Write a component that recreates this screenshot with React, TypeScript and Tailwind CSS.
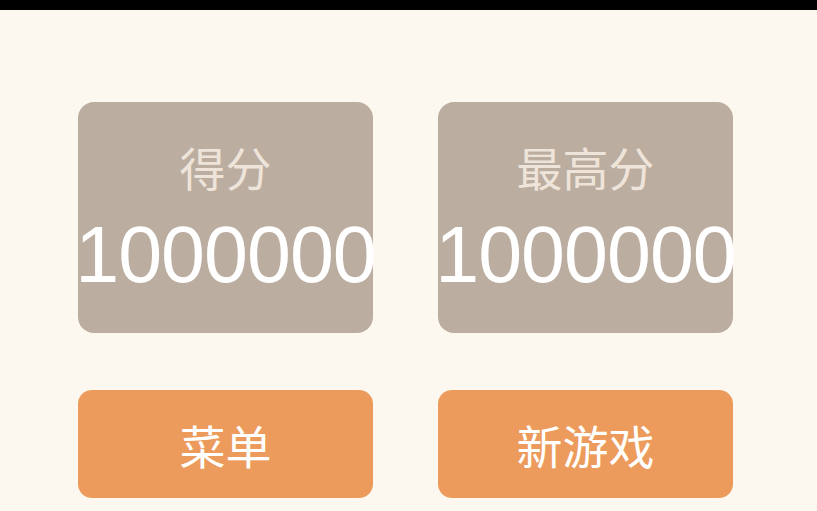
/* ── Score panel with menu / new game buttons ── */

const CJK = "font-['Noto_Sans_CJK_SC','Noto_Sans',sans-serif]";

function ScoreBox({ label, value }: { label: string; value: string }) {
  return (
    <div className="flex h-[231px] w-[295px] flex-col items-center rounded-[16px] bg-[#bbada0]">
      <div className={`${CJK} mt-[34px] text-[46px] leading-[60px] text-[#eee4da]`}>{label}</div>
      <div className="mt-[19px] whitespace-nowrap font-['Liberation_Sans',sans-serif] text-[79px] leading-[80px] tracking-[-1px] text-white">
        {value}
      </div>
    </div>
  );
}

function ActionButton({ label }: { label: string }) {
  return (
    <button
      className={`${CJK} flex h-[108px] w-[295px] items-center justify-center rounded-[14px] bg-[#ec9b5c] text-[46px] font-normal text-white`}
    >
      {label}
    </button>
  );
}

export default function App() {
  return (
    <div className="flex h-[511px] w-[817px] flex-col overflow-hidden bg-[#fcf8f0]">
      <div className="h-[10px] bg-black" />
      <div className="flex flex-col gap-[57px] pl-[78px] pt-[92px]">
        <div className="flex gap-[65px]">
          <ScoreBox label="得分" value="1000000" />
          <ScoreBox label="最高分" value="1000000" />
        </div>
        <div className="flex gap-[65px]">
          <ActionButton label="菜单" />
          <ActionButton label="新游戏" />
        </div>
      </div>
    </div>
  );
}
